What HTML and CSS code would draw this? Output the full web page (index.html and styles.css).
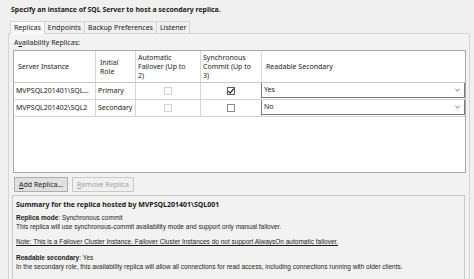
FILE: index.html
```html
<!DOCTYPE html>
<html>
<head>
<meta charset="utf-8">
<link rel="stylesheet" href="styles.css">
</head>
<body>
<div class="title">Specify an instance of SQL Server to host a secondary replica.</div>
<div class="tabs">
  <div class="tab active">Replicas</div>
  <div class="tab">Endpoints</div>
  <div class="tab">Backup Preferences</div>
  <div class="tab">Listener</div>
</div>
<div class="panel">
  <div class="label">A<u>v</u>ailability Replicas:</div>
  <div class="grid">
    <div class="row head">
      <div class="cell c1 mid">Server Instance</div>
      <div class="cell c2 mid">Initial<br>Role</div>
      <div class="cell c3">Automatic<br>Failover (Up to<br>2)</div>
      <div class="cell c4">Synchronous<br>Commit (Up to<br>3)</div>
      <div class="cell c5 mid">Readable Secondary</div>
    </div>
    <div class="row">
      <div class="cell c1">MVPSQL201401\SQL...</div>
      <div class="cell c2">Primary</div>
      <div class="cell c3 ctr"><span class="cb disabled"></span></div>
      <div class="cell c4 ctr"><span class="cb checked"><svg viewBox="0 0 8 8" width="8" height="8"><path d="M1.3 4.1 L3.2 6.1 L6.8 1.7" fill="none" stroke="#222" stroke-width="1.3"/></svg></span></div>
      <div class="cell c5 combo-cell"><div class="combo"><span>Yes</span><svg class="arrow" viewBox="0 0 6 4" width="5" height="4"><path d="M0.5 0.8 L3 3.2 L5.5 0.8" fill="none" stroke="#444" stroke-width="1"/></svg></div></div>
    </div>
    <div class="row">
      <div class="cell c1">MVPSQL201402\SQL2</div>
      <div class="cell c2">Secondary</div>
      <div class="cell c3 ctr"><span class="cb disabled"></span></div>
      <div class="cell c4 ctr"><span class="cb"></span></div>
      <div class="cell c5 combo-cell"><div class="combo"><span>No</span><svg class="arrow" viewBox="0 0 6 4" width="5" height="4"><path d="M0.5 0.8 L3 3.2 L5.5 0.8" fill="none" stroke="#444" stroke-width="1"/></svg></div></div>
    </div>
  </div>
  <div class="buttons">
    <div class="btn"><u>A</u>dd Replica...</div>
    <div class="btn off"><u>R</u>emove Replica</div>
  </div>
  <div class="summary">
    <div class="sum-title">Summary for the replica hosted by MVPSQL201401\SQL001</div>
    <div class="sum-body">
      <div class="line"><b>Replica mode</b>: Synchronous commit</div>
      <div class="line">This replica will use synchronous-commit availability mode and support only manual failover.</div>
      <div class="line note"><u>Note: This is a Failover Cluster Instance. Failover Cluster Instances do not support AlwaysOn automatic failover.</u></div>
      <div class="line l4"><b>Readable secondary</b>: Yes</div>
      <div class="line">In the secondary role, this availability replica will allow all connections for read access, including connections running with older clients.</div>
    </div>
  </div>
</div>
</body>
</html>
```
FILE: styles.css
```css
html, body {
  margin: 0;
  padding: 0;
}
body {
  background: #f0f0f0;
  width: 474px;
  height: 279px;
  overflow: hidden;
  font-family: "Noto Sans", "Open Sans", sans-serif;
  font-size: 7px;
  color: #1a1a1a;
}
.title {
  font-weight: bold;
  padding: 4px 0 0 11px;
  height: 13px;
  line-height: 12px;
  font-size: 6.9px;
}
.tabs {
  display: flex;
  margin: 4px 0 0 10px;
  height: 12px;
  align-items: flex-end;
}
.tab {
  height: 11px;
  line-height: 11px;
  padding: 0 3px;
  border: 1px solid #d4d4d4;
  border-bottom: none;
  margin-right: -1px;
  background: #f0f0f0;
}
.tab.active {
  height: 12px;
  line-height: 12px;
  background: #fafafa;
  position: relative;
  z-index: 1;
  margin-bottom: -1px;
}
.panel {
  margin-left: 8px;
  width: 460px;
  border: 1px solid #d4d4d4;
  border-bottom: none;
  height: 246px;
  background: #f2f2f2;
  display: flex;
  flex-direction: column;
}
.label {
  height: 16px;
  line-height: 18px;
  padding-left: 5px;
}
.grid {
  margin-left: 4px;
  width: 451px;
  height: 121px;
  border: 1px solid #a9a9a9;
  background: #fff;
  display: flex;
  flex-direction: column;
}
.row {
  display: flex;
  height: 16px;
  border-bottom: 1px solid #d6d6d6;
}
.row.head {
  height: 31px;
  border-bottom: 1px solid #c8c8c8;
}
.cell {
  box-sizing: border-box;
  border-right: 1px solid #d6d6d6;
  padding: 0 2px;
  line-height: 16px;
  white-space: nowrap;
  overflow: hidden;
}
.head .cell {
  line-height: 9px;
  padding-top: 2px;
  color: #222;
}
.head .cell.mid {
  display: flex;
  align-items: center;
  padding-top: 0;
  padding-left: 4px;
}
.c1 { width: 82px; }
.c2 { width: 40px; }
.c3 { width: 65px; }
.c4 { width: 61px; }
.c5 { width: 203px; border-right: none; }
.ctr {
  display: flex;
  align-items: center;
  justify-content: center;
}
.cb {
  width: 8px;
  height: 8px;
  box-sizing: border-box;
  border: 1px solid #8a8a8a;
  background: #fff;
  display: flex;
}
.cb.checked { border-color: #5a5a5a; }
.cb svg { display: block; margin: -1px; }
.cb.disabled {
  border-color: #d2d2d2;
}
.combo-cell {
  padding: 0;
  margin-left: -1px;
  width: 204px;
}
.combo {
  box-sizing: border-box;
  height: 16px;
  border: 1px solid #7a7a7a;
  margin-top: -1px;
  display: flex;
  align-items: center;
  justify-content: space-between;
  padding: 0 4px 0 2px;
  line-height: 14px;
  background: #fff;
}
.arrow { display: block; }
.buttons {
  display: flex;
  gap: 4px;
  margin: 4px 0 0 5px;
  height: 15px;
}
.btn {
  box-sizing: border-box;
  height: 15px;
  line-height: 13px;
  padding: 0 4px;
  border: 1px solid #adadad;
  background: #e1e1e1;
}
.btn.off {
  border-color: #c8c8c8;
  background: #f0f0f0;
  color: #a3a3a3;
}
.summary {
  margin: 3px 0 0 3px;
  width: 453px;
  flex: 1;
  box-sizing: border-box;
  border: 1px solid #c8c8c8;
  border-bottom: none;
  padding: 3px 0 0 3px;
}
.sum-title {
  font-weight: bold;
  line-height: 12px;
  font-size: 7px;
}
.sum-body {
  font-family: "Liberation Sans", Arial, sans-serif;
  font-size: 6.5px;
  line-height: 9px;
  padding-top: 2px;
}
.sum-body b { font-weight: bold; }
.line { white-space: nowrap; }
.note { margin-top: 6px; }
.l4 { margin-top: 7px; }
```
